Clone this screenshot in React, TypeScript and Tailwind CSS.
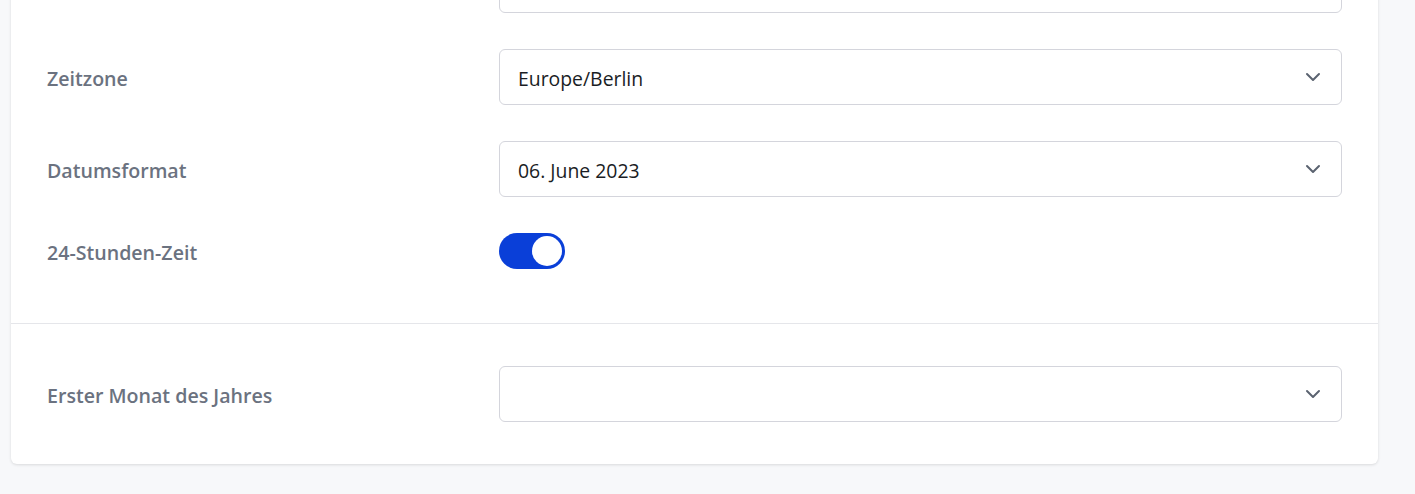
import React from "react";

function Chevron() {
  return (
    <svg width="16" height="16" viewBox="0 0 16 16" fill="none" className="shrink-0">
      <path d="M2 5l6 6 6-6" stroke="#5b6370" strokeWidth="2" strokeLinecap="round" strokeLinejoin="round" />
    </svg>
  );
}

function Select({ value }: { value: string }) {
  return (
    <div className="flex h-[56px] w-full items-center justify-between rounded-[6px] border border-[#d4d5dc] bg-white pl-[18px] pr-[20px]">
      <span className="pt-[3px] text-[19.4px] text-[#1a1d24]">{value}</span>
      <Chevron />
    </div>
  );
}

function Row({ label, children }: { label: string; children: React.ReactNode }) {
  return (
    <div className="flex items-center">
      <div className="w-[452px] shrink-0 pt-[3px] text-[19.6px] font-semibold text-[#6b7280]">{label}</div>
      <div className="flex-1">{children}</div>
    </div>
  );
}

export default function App() {
  return (
    <div className="h-[494px] overflow-hidden bg-[#f7f8fa] pl-[11px] pr-[37px]" style={{ fontFamily: '"Open Sans", "Noto Sans", sans-serif' }}>
      <div className="-mt-[43px] rounded-b-[6px] bg-white shadow-[0_1px_3px_rgba(0,0,0,0.12)]">
        <div className="flex flex-col gap-[36px] px-[36px] pb-[54px]">
          <Row label="">
            <Select value="" />
          </Row>
          <Row label="Zeitzone">
            <Select value="Europe/Berlin" />
          </Row>
          <Row label="Datumsformat">
            <Select value="06. June 2023" />
          </Row>
          <Row label="24-Stunden-Zeit">
            <div className="relative h-[36px] w-[66px] rounded-full bg-[#0a3fd8]">
              <div className="absolute right-[3px] top-[3px] h-[30px] w-[30px] rounded-full bg-white" />
            </div>
          </Row>
        </div>
        <div className="border-t border-[#e5e6ea] px-[36px] pb-[42px] pt-[42px]">
          <Row label="Erster Monat des Jahres">
            <Select value="" />
          </Row>
        </div>
      </div>
    </div>
  );
}
